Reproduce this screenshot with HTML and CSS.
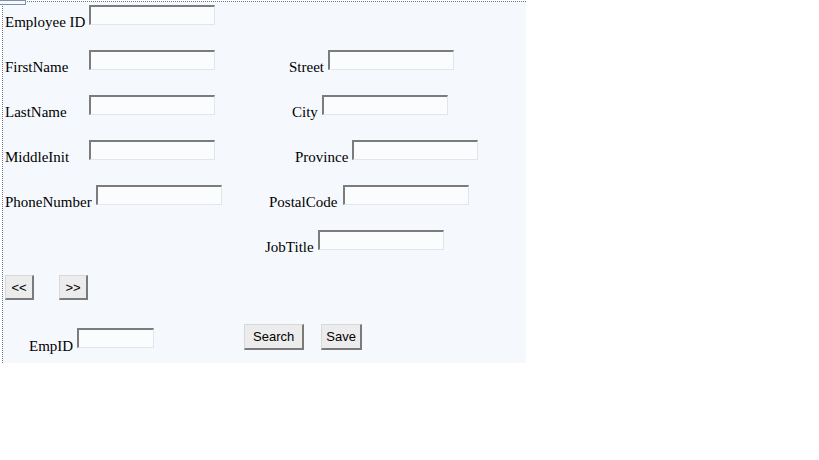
FILE: index.html
```
<!DOCTYPE html>
<html lang="en">
  <head>
    <meta charset="utf-8">
    <title>Employees</title>
    <link rel="stylesheet" href="styles.css">
  </head>
  <body>
    <form class="panel">
      <span class="tag"></span>

      <!-- Employee details, two columns -->
      <div class="fields">
        <div class="field">
          <label class="left">Employee ID</label>
          <input type="text">
        </div>
        <div class="field"></div>

        <div class="field">
          <label class="left">FirstName</label>
          <input type="text">
        </div>
        <div class="field indent-24">
          <label>Street</label>
          <input type="text">
        </div>

        <div class="field">
          <label class="left">LastName</label>
          <input type="text">
        </div>
        <div class="field indent-27">
          <label>City</label>
          <input type="text">
        </div>

        <div class="field">
          <label class="left">MiddleInit</label>
          <input type="text">
        </div>
        <div class="field indent-30">
          <label>Province</label>
          <input type="text">
        </div>

        <div class="field">
          <label class="left">PhoneNumber</label>
          <input type="text">
        </div>
        <div class="field indent-4 wide-gap">
          <label>PostalCode</label>
          <input type="text">
        </div>

        <div class="field"></div>
        <div class="field">
          <label>JobTitle</label>
          <input type="text">
        </div>
      </div>

      <!-- Record navigation -->
      <div class="pager">
        <button type="button" class="btn nav">&lt;&lt;</button>
        <button type="button" class="btn nav">&gt;&gt;</button>
      </div>

      <!-- Lookup by id -->
      <div class="lookup">
        <div class="field">
          <label class="emp">EmpID</label>
          <input type="text" class="short">
        </div>
        <button type="button" class="btn search">Search</button>
        <button type="button" class="btn save">Save</button>
      </div>
    </form>
  </body>
</html>
```

FILE: styles.css
```
body{
  margin: 0;
  background: #fff;
  font-family: "Liberation Serif", "Times New Roman", serif;
  font-size: 15px;
  color: #000;
}

.panel{
  position: relative;
  box-sizing: border-box;
  width: 524px;
  height: 362px;
  margin: 1px 0 0 2px;
  padding: 3px 0 0 2px;
  background: #f5f9fd;
  border-top: 1px dotted #6f7780;
  border-left: 1px dotted #6f7780;
}

/* little designer tab in the corner */
.tag{
  position: absolute;
  top: -2px;
  left: -3px;
  width: 25px;
  height: 3px;
  border: 1px solid #7d90aa;
  border-left: none;
  background: #f5f9fd;
}

.fields{
  display: grid;
  grid-template-columns: 260px 1fr;
  grid-auto-rows: 45px;
}

.field{
  display: flex;
  align-items: flex-start;
  gap: 4px;
}

.field label{
  line-height: 17px;
  margin-top: 9px;
  white-space: nowrap;
}

.field label.left{
  min-width: 80px;
}

.indent-4{ padding-left: 4px; }
.indent-24{ padding-left: 24px; }
.indent-27{ padding-left: 27px; }
.indent-30{ padding-left: 30px; }

.wide-gap{ gap: 6px; }

input[type=text]{
  box-sizing: border-box;
  width: 126px;
  height: 20px;
  margin: 0;
  padding: 0 2px;
  background: #fafcfe;
  border-style: solid;
  border-width: 2px 1px 1px 2px;
  border-color: #7c7c7c #e2e6ea #e2e6ea #7c7c7c;
  font: 13px "Liberation Sans", Arial, sans-serif;
}

input.short{
  width: 77px;
  margin-top: 4px;
}

.btn{
  box-sizing: border-box;
  height: 25px;
  margin: 0;
  padding: 0;
  background: #ececec;
  border-style: solid;
  border-width: 1px 2px 2px 1px;
  border-color: #d8d8d8 #7a7a7a #7a7a7a #d8d8d8;
  font: 13px "Liberation Sans", Arial, sans-serif;
  color: #000;
}

.pager{
  display: flex;
  gap: 25px;
}

.nav{
  width: 29px;
}

.lookup{
  display: flex;
  align-items: flex-start;
  margin-top: 24px;
  padding-left: 24px;
}

.lookup .field label{
  margin-top: 14px;
}

.search{
  width: 60px;
  height: 26px;
  margin-left: 90px;
}

.save{
  width: 41px;
  height: 26px;
  margin-left: 17px;
}
```
